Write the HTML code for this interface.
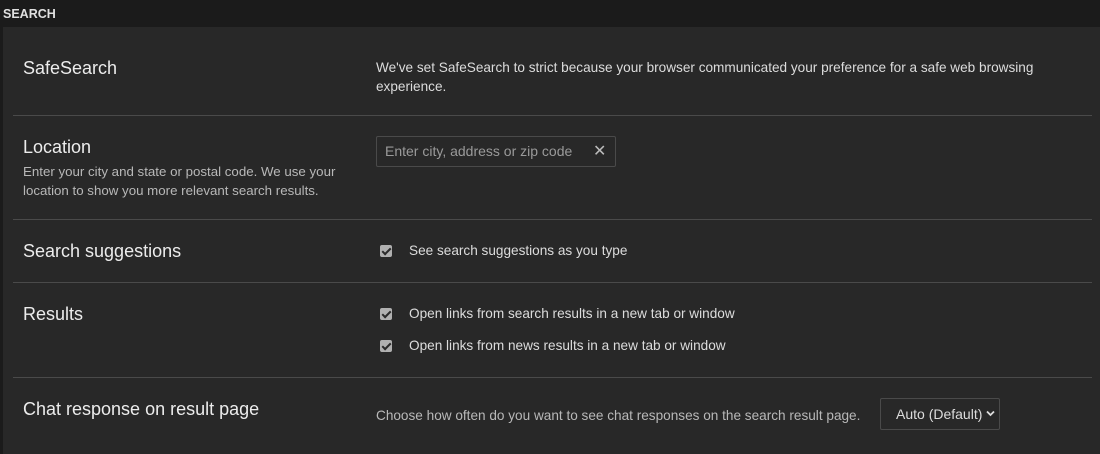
<!DOCTYPE html>
<html><head><style>
body{margin:0;width:1100px;height:454px;background:#1b1b1b;font-family:"Liberation Sans",sans-serif;overflow:hidden;position:relative;color:#e8e8e8}
.hdr{position:absolute;left:3px;top:7px;font-size:12.5px;font-weight:bold;color:#e0e0e0}
.panel{position:absolute;left:3px;top:27px;width:1097px;height:427px;background:#282828}
.a{position:absolute;white-space:nowrap}
.t{font-size:18px;color:#ececec}
.s{font-size:13.3px;color:#b8b8b8;line-height:19px}
.d{font-size:13.6px;color:#dcdcdc;line-height:19px}
.hr{position:absolute;left:13px;width:1079px;height:1px;background:#4a4a4a}
.cb{position:absolute;width:12px;height:12px;background:#b0b0b0;border-radius:2px}
.cb:after{content:"";position:absolute;left:4px;top:1px;width:3px;height:7px;border:solid #2a2a2a;border-width:0 2px 2px 0;transform:rotate(45deg)}
</style></head><body>
<div class="hdr">SEARCH</div>
<div class="panel"></div>
<div class="a t" style="left:23px;top:58px">SafeSearch</div>
<div class="a d" style="left:376px;top:58px;white-space:normal;width:690px">We've set SafeSearch to strict because your browser communicated your preference for a safe web browsing experience.</div>
<div class="hr" style="top:115px"></div>
<div class="a t" style="left:23px;top:137px">Location</div>
<div class="a s" style="left:23px;top:162px;white-space:normal;width:340px">Enter your city and state or postal code. We use your location to show you more relevant search results.</div>
<div class="a" style="left:376px;top:136px;width:238px;height:29px;border:1px solid #4a4a4a;border-radius:2px"></div>
<div class="a" style="left:385px;top:143px;font-size:14px;color:#9a9a9a">Enter city, address or zip code</div>
<div class="a" style="left:593px;top:141px;font-size:16px;color:#bbb">✕</div>
<div class="hr" style="top:219px"></div>
<div class="a t" style="left:23px;top:241px">Search suggestions</div>
<div class="cb" style="left:380px;top:245px"></div>
<div class="a d" style="left:409px;top:241px">See search suggestions as you type</div>
<div class="hr" style="top:282px"></div>
<div class="a t" style="left:23px;top:304px">Results</div>
<div class="cb" style="left:380px;top:308px"></div>
<div class="a d" style="left:409px;top:304px">Open links from search results in a new tab or window</div>
<div class="cb" style="left:380px;top:340px"></div>
<div class="a d" style="left:409px;top:336px">Open links from news results in a new tab or window</div>
<div class="hr" style="top:377px"></div>
<div class="a t" style="left:23px;top:399px">Chat response on result page</div>
<div class="a s" style="left:376px;top:406px;font-size:13.6px">Choose how often do you want to see chat responses on the search result page.</div>
<div class="a" style="left:880px;top:398px;width:118px;height:30px;border:1px solid #4a4a4a;border-radius:2px"></div>
<div class="a d" style="left:896px;top:405px;font-size:14px">Auto (Default)</div>
<svg class="a" style="left:986px;top:410px" width="9" height="7" viewBox="0 0 9 7"><path d="M1 1.5L4.5 5 8 1.5" fill="none" stroke="#ddd" stroke-width="1.8"/></svg>
</body></html>
